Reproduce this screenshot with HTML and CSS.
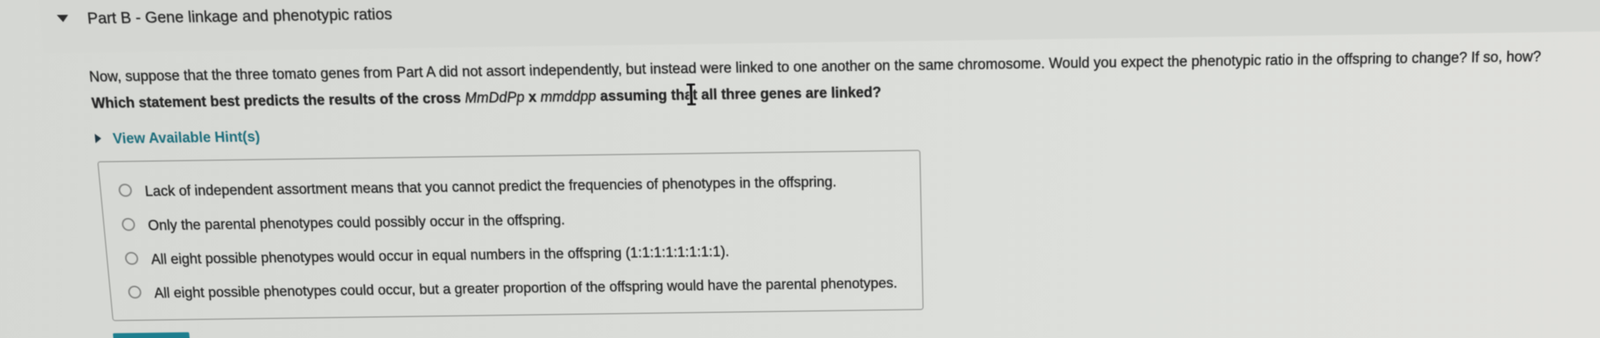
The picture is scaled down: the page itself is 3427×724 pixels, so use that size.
FILE: index.html
```html
<!DOCTYPE html>
<html lang="en">
<head>
<meta charset="utf-8">
<title>Part B - Gene linkage and phenotypic ratios</title>
<link rel="stylesheet" href="styles.css">
</head>
<body>
<div class="screen">
  <div class="part-header">
    <div class="part-row">
      <span class="caret-down"></span>
      <h2 class="part-title">Part B - Gene linkage and phenotypic ratios</h2>
    </div>
  </div>
  <div class="part-body">
    <p class="prompt">Now, suppose that the three tomato genes from Part A did not assort independently, but instead were linked to one another on the same chromosome. Would you expect the phenotypic ratio in the offspring to change? If so, how?</p>
    <p class="question"><strong>Which statement best predicts the results of the cross <em>MmDdPp</em> x <em>mmddpp</em> assuming that all three genes are linked?</strong></p>
    <div class="hints">
      <span class="caret-right"></span>
      <span class="hint-link">View Available Hint(s)</span>
    </div>
    <div class="choices">
      <div class="choice"><span class="radio"></span><span class="choice-text">Lack of independent assortment means that you cannot predict the frequencies of phenotypes in the offspring.</span></div>
      <div class="choice"><span class="radio"></span><span class="choice-text">Only the parental phenotypes could possibly occur in the offspring.</span></div>
      <div class="choice"><span class="radio"></span><span class="choice-text">All eight possible phenotypes would occur in equal numbers in the offspring (1:1:1:1:1:1:1:1).</span></div>
      <div class="choice"><span class="radio"></span><span class="choice-text">All eight possible phenotypes could occur, but a greater proportion of the offspring would have the parental phenotypes.</span></div>
    </div>
    <div class="submit-bar"></div>
  </div>
  <div class="cursor">
    <svg width="26" height="52" viewBox="0 0 26 52"><path d="M3 2h20v6h-6.5v36h6.5v6H3v-6h6.5V8H3z" fill="#121212" stroke="#f4f4f4" stroke-width="1.5"/></svg>
  </div>
</div>
</body>
</html>
```
FILE: styles.css
```css
html, body {
  margin: 0;
  height: 100%;
  overflow: hidden;
}

body {
  background: linear-gradient(100deg, #d5d7d3 0%, #d9dbd7 35%, #dddfdb 70%, #e0e0dc 100%);
  font-family: "Liberation Sans", Arial, sans-serif;
  color: #242424;
}

.screen {
  position: relative;
  width: 3427px;
  height: 820px;
  margin-top: -60px;
  transform-origin: 2115px 420px;
  transform: perspective(2000px) rotateX(-4.9deg) rotate(-0.8deg);
  filter: blur(0.9px);
}

.part-header {
  margin-left: 118px;
  margin-right: -120px;
  height: 148px;
  box-sizing: border-box;
  padding-top: 55.5px;
  padding-left: 36px;
  background: #d4d6d2;
}

.part-row {
  display: flex;
  align-items: center;
  height: 40px;
}

.caret-down {
  width: 0;
  height: 0;
  border-left: 12px solid transparent;
  border-right: 12px solid transparent;
  border-top: 15px solid #2a2a2a;
  flex: none;
}

.part-title {
  margin: 0 0 0 40px;
  font-size: 33.3px;
  line-height: 40px;
  font-weight: normal;
  color: #262626;
  white-space: nowrap;
  -webkit-text-stroke: 0.5px #262626;
}

.part-body {
  padding-left: 210px;
  padding-top: 30px;
}

.prompt,
.question {
  margin: 0;
  font-size: 30.6px;
  line-height: 40px;
  white-space: nowrap;
  -webkit-text-stroke: 0.5px #242424;
}

.question {
  margin-top: 16px;
  font-size: 30.5px;
}

.question em {
  font-weight: normal;
}

.hints {
  display: flex;
  align-items: center;
  height: 40px;
  margin-top: 36.4px;
}

.caret-right {
  width: 0;
  height: 0;
  border-top: 10px solid transparent;
  border-bottom: 10px solid transparent;
  border-left: 13px solid #1c3440;
  flex: none;
}

.hint-link {
  margin-left: 25px;
  font-size: 30.5px;
  font-weight: bold;
  color: #1b6c7a;
  white-space: nowrap;
}

.choices {
  margin-top: 28.6px;
  width: 1762px;
  box-sizing: border-box;
  border: 2px solid #8b8c8a;
  border-radius: 6px;
  padding: 24.5px 0 23.5px 38px;
}

.choice {
  display: flex;
  align-items: center;
  height: 74px;
  font-size: 30.5px;
}

.radio {
  flex: none;
  width: 28px;
  height: 28px;
  box-sizing: border-box;
  border: 3px solid #7a7b79;
  border-radius: 50%;
  margin-right: 28px;
}

.choice-text {
  padding-top: 4px;
  white-space: nowrap;
  -webkit-text-stroke: 0.5px #242424;
}

.submit-bar {
  margin-top: 27px;
  margin-left: -2px;
  width: 166px;
  height: 48px;
  border-radius: 3px;
  background: #1d7e8e;
}

.cursor {
  position: absolute;
  left: 1474px;
  top: 228px;
  width: 26px;
  height: 52px;
}

.cursor svg {
  display: block;
}
```
